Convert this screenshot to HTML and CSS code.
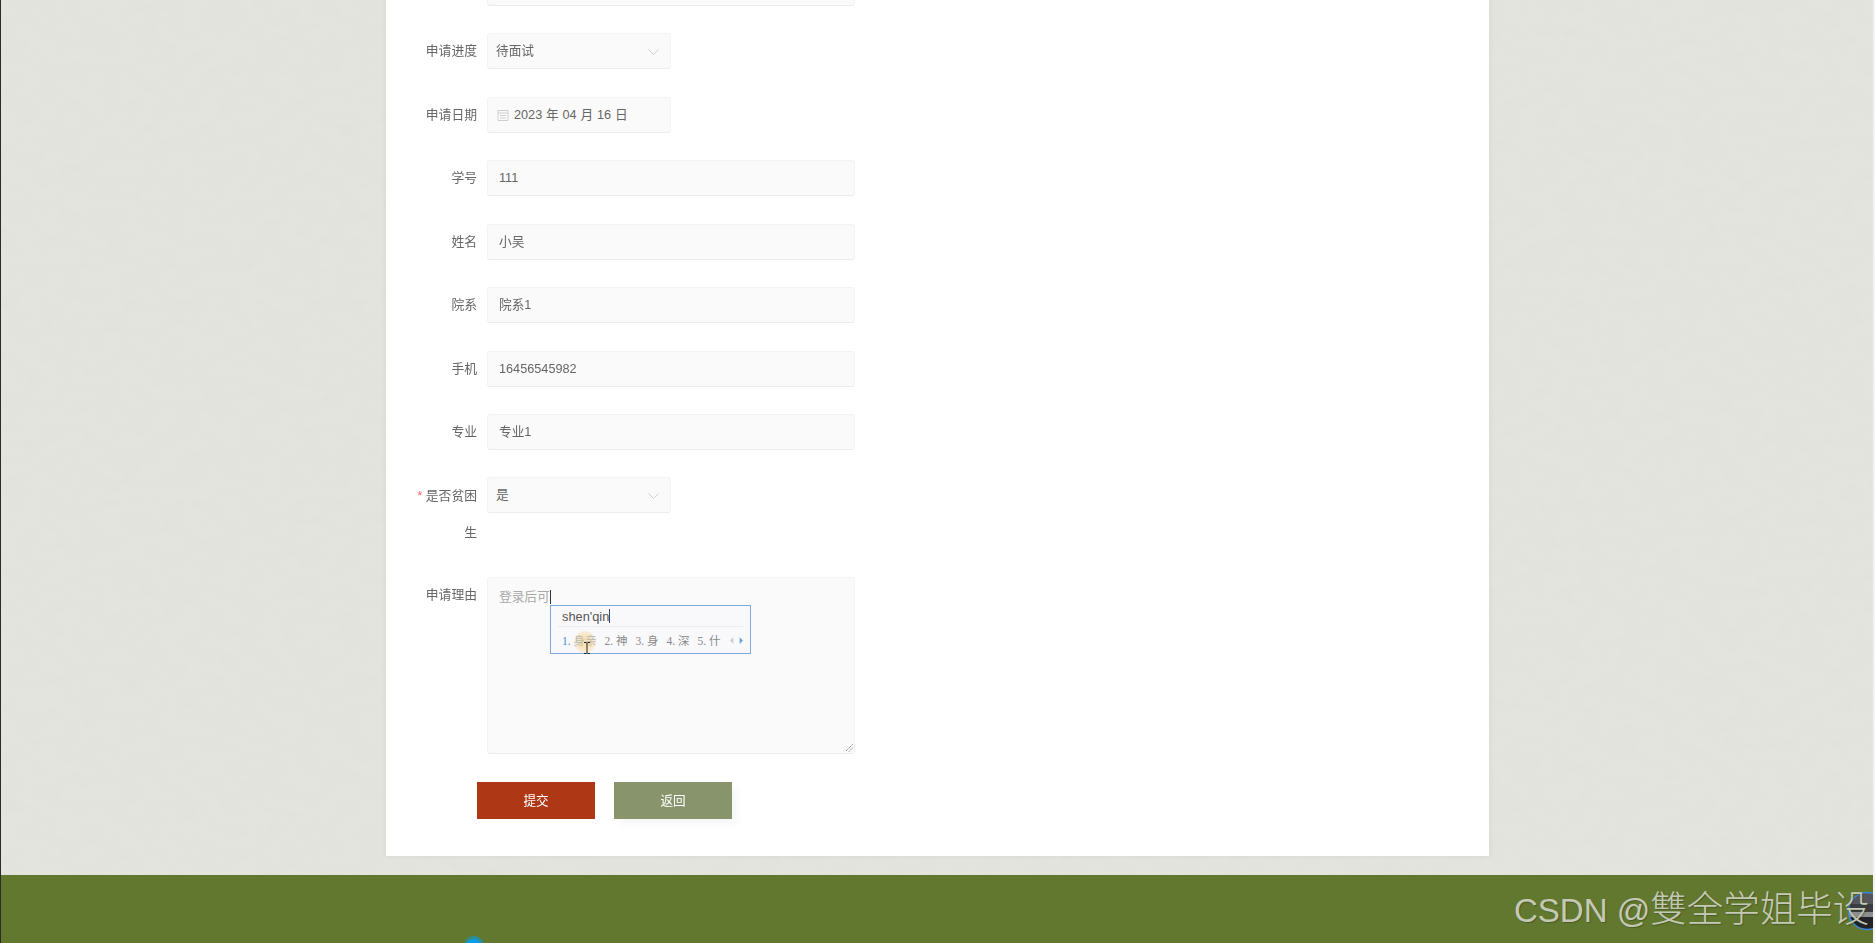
FILE: index.html
```html
<!DOCTYPE html>
<html lang="zh-CN">
<head>
<meta charset="utf-8">
<title>申请表单</title>
<link rel="stylesheet" href="styles.css">
</head>
<body>
<div class="screen">
  <svg class="texture" width="1875" height="943" aria-hidden="true">
    <filter id="paper" x="0" y="0" width="100%" height="100%">
      <feTurbulence type="fractalNoise" baseFrequency="0.05 0.08" numOctaves="4" seed="7"/>
      <feColorMatrix type="matrix" values="0 0 0 0 0.45  0 0 0 0 0.45  0 0 0 0 0.40  0.9 0 0 0 -0.3"/>
    </filter>
    <rect width="1875" height="943" filter="url(#paper)" opacity="0.07"/>
  </svg>

  <main class="panel">
    <form class="form">
      <div class="row">
        <span class="label"></span>
        <div class="field"></div>
      </div>
      <div class="row">
        <span class="label">申请进度</span>
        <div class="field select">待面试
          <svg class="chevron" width="11" height="6" viewBox="0 0 11 6"><path d="M.5.5l5 5 5-5" fill="none" stroke="#cfcfcf"/></svg>
        </div>
      </div>
      <div class="row">
        <span class="label">申请日期</span>
        <div class="field select date">
          <svg class="cal" width="12" height="12" viewBox="0 0 12 12"><path d="M1 1.500h10v10H1zM1 4h10M3 6.500h6M3 9h6" fill="none" stroke="#cfcfcf"/></svg>
          2023 年 04 月 16 日
        </div>
      </div>
      <div class="row"><span class="label">学号</span><div class="field">111</div></div>
      <div class="row"><span class="label">姓名</span><div class="field">小吴</div></div>
      <div class="row"><span class="label">院系</span><div class="field">院系1</div></div>
      <div class="row"><span class="label">手机</span><div class="field">16456545982</div></div>
      <div class="row row-tight"><span class="label">专业</span><div class="field">专业1</div></div>
      <div class="row">
        <span class="label label-wrap"><i class="req">*</i> 是否贫困生</span>
        <div class="field select">是
          <svg class="chevron" width="11" height="6" viewBox="0 0 11 6"><path d="M.5.5l5 5 5-5" fill="none" stroke="#cfcfcf"/></svg>
        </div>
      </div>
      <div class="row">
        <span class="label">申请理由</span>
        <div class="field area">
          <span class="placeholder">登录后可</span><span class="caret"></span>
          <svg class="grip" width="8" height="8" viewBox="0 0 8 8"><path d="M7.500 .5l-7 7M7.500 4l-3.500 3.500" fill="none" stroke="#555" stroke-dasharray="1 1"/></svg>
          <div class="ime">
            <div class="ime-input">shen'qin<span class="ime-caret"></span></div>
            <div class="ime-list">
              <span class="cand on"><b>1.</b> 身亲</span>
              <span class="cand">2. 神</span>
              <span class="cand">3. 身</span>
              <span class="cand">4. 深</span>
              <span class="cand">5. 什</span>
              <svg class="ime-arrows" width="14" height="7" viewBox="0 0 14 7"><path d="M3.500 0v7L0 3.500z" fill="#c8ccd2"/><path d="M10 0v7l3.500-3.500z" fill="#6fa3dc"/></svg>
            </div>
            <span class="halo"></span>
            <svg class="ibeam" width="8" height="12" viewBox="0 0 8 12"><path d="M1 .5h2.200l.8.8.8-.8H7M4 1.300v9.400M1 11.500h2.200l.8-.8.8.8H7" fill="none" stroke="#222"/></svg>
          </div>
        </div>
      </div>
      <div class="actions">
        <button type="button" class="btn submit">提交</button>
        <button type="button" class="btn back">返回</button>
      </div>
    </form>
  </main>

  <footer class="footer">
    <span class="dot"></span>
    <svg class="avatar" width="40" height="40" viewBox="0 0 40 40">
      <defs><clipPath id="av"><circle cx="20" cy="20" r="18.500"/></clipPath></defs>
      <g clip-path="url(#av)">
        <rect width="40" height="40" fill="#3b3c42"/>
        <rect y="0" width="40" height="13" fill="#55565b"/>
        <rect y="21" width="40" height="5" fill="#8b8d90"/>
        <rect y="26" width="40" height="14" fill="#202227"/>
      </g>
      <circle cx="20" cy="20" r="18.500" fill="none" stroke="#3d86d8" stroke-width="1.500"/>
    </svg>
    <span class="watermark"><span class="wm-latin">CSDN @</span>雙全学姐毕设</span>
  </footer>
</div>
</body>
</html>
```
FILE: styles.css
```css
* { box-sizing: border-box; }

html, body {
  margin: 0;
  height: 100%;
  overflow: hidden;
}

body {
  background: #e4e4de;
  font-family: "Liberation Sans", "Noto Sans CJK SC", sans-serif;
  color: #666;
}

.screen {
  position: relative;
  width: 1875px;
  height: 943px;
  overflow: hidden;
  display: flex;
  flex-direction: column;
  border-left: 1px solid #2c2c2a;
  border-right: 2px solid #f3f3f1;
}

.texture {
  position: absolute;
  left: 0;
  top: 0;
}

.panel {
  position: relative;
  width: 1103px;
  height: 886.500px;
  margin: -30.500px 0 19px 385px;
  flex: none;
  background: #fff;
  box-shadow: 0 0 5px rgba(130, 110, 130, 0.12);
}

.form {
  padding-left: 21px;
  width: 469px;
  filter: blur(0.35px);
}

.row {
  display: flex;
  gap: 10px;
  margin-bottom: 27.500px;
}

.row-tight {
  margin-bottom: 27px;
}

.label {
  flex: none;
  width: 70px;
  min-height: 36px;
  line-height: 36px;
  font-size: 12.800px;
  text-align: right;
  color: #666;
}

.label-wrap {
  line-height: 37px;
  margin-bottom: -2px;
}

.req {
  font-style: normal;
  color: #f56c6c;
}

.field {
  position: relative;
  width: 368px;
  height: 36px;
  padding-left: 11px;
  line-height: 34px;
  font-size: 12.700px;
  color: #666;
  background: #fafafa;
  border: 1px solid #f3f3f3;
  border-bottom-color: #ececec;
  border-radius: 3px;
}

.select {
  width: 184px;
  padding-left: 8px;
}

.chevron {
  position: absolute;
  right: 11px;
  top: 15px;
}

.date {
  padding-left: 26px;
  word-spacing: 0.300px;
}

.cal {
  position: absolute;
  left: 9px;
  top: 11px;
}

.area {
  height: 177px;
  line-height: 38px;
}

.placeholder {
  color: #a9a9a9;
}

.caret {
  position: absolute;
  left: 62px;
  top: 12px;
  width: 1px;
  height: 14px;
  background: #333;
}

.grip {
  position: absolute;
  right: 1px;
  bottom: 1px;
}

.ime {
  position: absolute;
  left: 62px;
  top: 27px;
  width: 201px;
  height: 49px;
  padding: 0 7px;
  background: #f9f9fb;
  border: 1px solid #7da9dc;
}

.ime-input {
  height: 21px;
  padding-left: 4px;
  line-height: 21px;
  font-size: 12.800px;
  color: #555;
  border-bottom: 1px solid #ececef;
}

.ime-caret {
  display: inline-block;
  width: 1px;
  height: 14px;
  vertical-align: -2px;
  background: #446;
}

.ime-list {
  display: flex;
  align-items: center;
  gap: 8px;
  height: 25px;
  padding: 3px 0 0 4px;
  font-family: "Liberation Serif", "Noto Sans CJK SC", serif;
  font-size: 11.500px;
  color: #8a8a8a;
}

.cand {
  white-space: nowrap;
}

.cand.on {
  color: #8fb3dc;
}

.cand b {
  font-weight: 400;
  color: #4a8ad8;
}

.ime-arrows {
  margin-left: 1px;
}

.halo {
  position: absolute;
  left: 23px;
  top: 25px;
  width: 22px;
  height: 22px;
  border-radius: 50%;
  background: radial-gradient(circle, rgba(250, 200, 120, 0.5) 35%, rgba(250, 205, 130, 0) 100%);
}

.ibeam {
  position: absolute;
  left: 32px;
  top: 36px;
}

.actions {
  display: flex;
  gap: 19px;
  padding-left: 70px;
  margin-top: 28.500px;
}

.btn {
  width: 118px;
  height: 37px;
  padding: 0 0 2px;
  border: 0;
  font: inherit;
  font-size: 12.600px;
  color: #fff;
}

.submit {
  background: #ae3716;
}

.back {
  background: #88956c;
  box-shadow: 5px 5px 8px rgba(0, 0, 0, 0.04);
}

.footer {
  position: relative;
  flex: 1;
  background: #62782f;
}

.watermark {
  position: absolute;
  left: 1513px;
  top: 13px;
  line-height: 44px;
  white-space: nowrap;
  font-size: 36.500px;
  font-weight: 300;
  color: #c4c9b6;
  text-shadow: 1px 1px 1px rgba(40, 50, 20, 0.4);
}

.wm-latin {
  font-size: 33px;
}

.avatar {
  position: absolute;
  left: 1846px;
  top: 16px;
}

.dot {
  position: absolute;
  left: 463px;
  top: 61px;
  width: 20px;
  height: 20px;
  border-radius: 50%;
  background: #0a9be8;
  border: 3px solid #2a8f9a;
}
```
